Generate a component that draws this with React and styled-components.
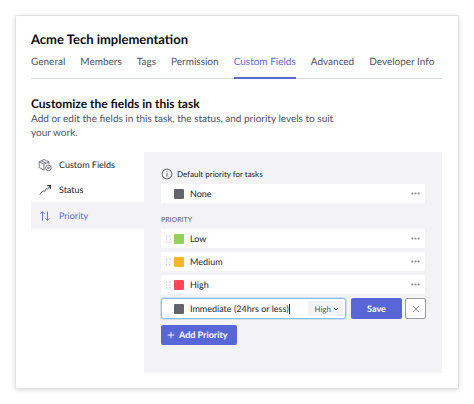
import React, { useState } from "react";
import styled, { createGlobalStyle } from "styled-components";

const tabs = [
  "General",
  "Members",
  "Tags",
  "Permission",
  "Custom Fields",
  "Advanced",
  "Developer Info",
];

const levels = [
  { name: "Low", color: "#92d25c" },
  { name: "Medium", color: "#fdb52c" },
  { name: "High", color: "#fc4557" },
];

const FieldsIcon = () => (
  <svg width="14" height="14" viewBox="0 0 14 14" fill="none" stroke="currentColor" strokeWidth="0.8" strokeLinejoin="round">
    <path d="M6.6 11.7 6 12 1.2 9.6V3.9L6 1.5l5 2.4v2.3" />
    <path d="M1.2 3.9 6 6.2l5-2.3M6 6.2V12M3.4 2.8l4.9 2.3" />
    <circle cx="10.4" cy="9.9" r="2.8" />
    <circle cx="10.4" cy="9.9" r="0.9" />
  </svg>
);

const StatusIcon = () => (
  <svg width="14" height="14" viewBox="0 0 14 14" fill="none" stroke="currentColor" strokeWidth="0.8" strokeLinecap="round" strokeLinejoin="round">
    <path d="m2 11.4 3.1-3.7 1.5 1L8.4 5.4l1.2.8 2.5-3.2" />
    <path d="M9.8 2.7h2.6v2.6" strokeWidth="1.2" />
  </svg>
);

const PriorityIcon = () => (
  <svg width="14" height="14" viewBox="0 0 14 14" fill="none" stroke="currentColor" strokeWidth="0.9" strokeLinecap="round" strokeLinejoin="round">
    <path d="M4.5 11.3V2.8M2.8 4.6l1.7-1.8 1.7 1.8" />
    <path d="M9.5 2.8v8.5M7.8 9.5l1.7 1.8 1.7-1.8" />
  </svg>
);

const InfoIcon = () => (
  <svg width="12" height="12" viewBox="0 0 12 12" fill="none" stroke="#4a4c57" strokeWidth="0.9">
    <circle cx="6" cy="6" r="4.9" />
    <path d="M6 5.2v3.4M6 3.3v1" />
  </svg>
);

const DotsIcon = () => (
  <svg width="9" height="3" viewBox="0 0 9 3" fill="#888a94">
    <circle cx="1.3" cy="1.5" r="1.05" />
    <circle cx="4.5" cy="1.5" r="1.05" />
    <circle cx="7.7" cy="1.5" r="1.05" />
  </svg>
);

const GripIcon = () => (
  <svg width="5" height="8" viewBox="0 0 5 8" fill="#c3c3cf">
    <path d="M0 .5h1.2v1.2H0zM0 3.4h1.2v1.2H0zM0 6.3h1.2v1.2H0zM3.3.5h1.2v1.2H3.3zM3.3 3.4h1.2v1.2H3.3zM3.3 6.3h1.2v1.2H3.3z" />
  </svg>
);

const PlusIcon = () => (
  <svg width="8" height="8" viewBox="0 0 8 8" stroke="#fff" strokeWidth="0.9">
    <path d="M4 .7v6.6M.7 4h6.6" />
  </svg>
);

const CloseIcon = () => (
  <svg width="8" height="8" viewBox="0 0 8 8" stroke="#7b7d88" strokeWidth="0.9">
    <path d="m.8.8 6.4 6.4M7.2.8.8 7.2" />
  </svg>
);

const navItems = [
  { label: "Custom Fields", icon: <FieldsIcon />, color: "#5b5d6c" },
  { label: "Status", icon: <StatusIcon />, color: "#33343c" },
  { label: "Priority", icon: <PriorityIcon />, active: true },
];

const PriorityRow = ({ name, color, draggable }) => (
  <Row>
    <Grip>{draggable && <GripIcon />}</Grip>
    <Swatch $color={color} />
    <RowName>{name}</RowName>
    <MoreButton aria-label={`More options for ${name}`}>
      <DotsIcon />
    </MoreButton>
  </Row>
);

const App = () => {
  const [name, setName] = useState("Immediate (24hrs or less)");

  return (
    <>
      <GlobalStyle />
      <Card>
        <Title>Acme Tech implementation</Title>
        <Tabs>
          {tabs.map((t) => (
            <Tab key={t} href="#" $active={t === "Custom Fields"}>
              {t}
            </Tab>
          ))}
        </Tabs>

        <Subtitle>Customize the fields in this task</Subtitle>
        <Description>
          Add or edit the fields in this task, the status, and priority levels to suit your work.
        </Description>

        <Body>
          <SideNav>
            {navItems.map((item) => (
              <NavItem key={item.label} href="#" $active={item.active}>
                <NavIcon $color={item.color}>{item.icon}</NavIcon>
                {item.label}
              </NavItem>
            ))}
          </SideNav>

          <Panel>
            <PanelLabel>
              <InfoIcon />
              Default priority for tasks
            </PanelLabel>
            <PriorityRow name="None" color="#62646b" />

            <GroupLabel>PRIORITY</GroupLabel>
            <List>
              {levels.map((l) => (
                <PriorityRow key={l.name} name={l.name} color={l.color} draggable />
              ))}
              <EditRow>
                <EditBox>
                  <Swatch $color="#62646b" />
                  <NameInput
                    aria-label="Priority name"
                    value={name}
                    onChange={(e) => setName(e.target.value)}
                  />
                  <Caret />
                  <SelectWrap>
                    <LevelSelect aria-label="Priority level" defaultValue="High">
                      <option>Low</option>
                      <option>Medium</option>
                      <option>High</option>
                    </LevelSelect>
                    <Chevron viewBox="0 0 6 4">
                      <path d="m.8.9 2.2 2L5.2.9" />
                    </Chevron>
                  </SelectWrap>
                </EditBox>
                <SaveButton>Save</SaveButton>
                <CancelButton aria-label="Cancel">
                  <CloseIcon />
                </CancelButton>
              </EditRow>
            </List>
            <AddButton>
              <PlusIcon />
              Add Priority
            </AddButton>
          </Panel>
        </Body>
      </Card>
    </>
  );
};

export default App;

// ---------------- Styled Components ----------------
const GlobalStyle = createGlobalStyle`
  * {
    box-sizing: border-box;
  }
  body {
    margin: 0;
    background: #fff;
    font-family: Lato, "Liberation Sans", sans-serif;
    font-size: 9px;
    line-height: 14px;
    text-rendering: geometricPrecision;
    color: #24252c;
  }
  button, input, select {
    font: inherit;
    color: inherit;
    text-rendering: inherit;
    margin: 0;
    padding: 0;
    border: 0;
    background: none;
  }
  svg {
    display: block;
    flex-shrink: 0;
  }
`;

const Card = styled.main`
  margin: 15px 15px 16px;
  padding: 15px 16px 15px 15px;
  background: #fff;
  border: 1px solid #e2e3e5;
  border-radius: 2px;
  box-shadow: 0 1px 4px rgba(0, 0, 0, 0.16);
`;

const Title = styled.h1`
  margin: 0;
  font-size: 13px;
  line-height: 16px;
  font-weight: 700;
  color: #0c0c10;
`;

const Tabs = styled.nav`
  display: flex;
  gap: 15px;
  margin-top: 8px;
  border-bottom: 1px solid #d5dbe3;
`;

const Tab = styled.a`
  padding-bottom: 8px;
  margin-bottom: -1px;
  border-bottom: 2px solid ${(p) => (p.$active ? "#5c68cf" : "transparent")};
  font-size: 10px;
  color: ${(p) => (p.$active ? "#5c68d8" : "#4e5166")};
  text-decoration: none;
  white-space: nowrap;
`;

const Subtitle = styled.h2`
  margin: 17px 0 0;
  font-size: 12px;
  line-height: 16px;
  font-weight: 700;
  color: #0c0c10;
`;

const Description = styled.p`
  margin: 0;
  max-width: 310px;
  font-size: 10px;
  color: #4e5166;
`;

const Body = styled.div`
  display: flex;
  margin-top: 12px;
`;

const SideNav = styled.nav`
  width: 113px;
  flex-shrink: 0;
`;

const NavItem = styled.a`
  display: flex;
  align-items: center;
  gap: 7px;
  height: ${(p) => (p.$active ? 27 : 25)}px;
  padding-left: 7px;
  background: ${(p) => (p.$active ? "#f3f3f5" : "transparent")};
  color: ${(p) => (p.$active ? "#5c68d8" : "#24252c")};
  text-decoration: none;
`;

const NavIcon = styled.span`
  color: ${(p) => p.$color || "inherit"};
`;

const Panel = styled.section`
  flex: 1;
  min-width: 0;
  padding: 15px 17px 28px;
  background: #f3f3f5;
`;

const PanelLabel = styled.div`
  display: flex;
  align-items: center;
  gap: 4px;
  margin-bottom: 3px;
  font-size: 8px;
`;

const Row = styled.div`
  display: flex;
  align-items: center;
  height: 19px;
  padding: 0 5px;
  background: #fff;
  border-radius: 1px;
`;

const Grip = styled.span`
  width: 8px;
`;

const Swatch = styled.span`
  width: 10px;
  height: 10px;
  flex-shrink: 0;
  border-radius: 1px;
  background: ${(p) => p.$color};
`;

const RowName = styled.span`
  flex: 1;
  margin-left: 6px;
`;

const MoreButton = styled.button`
  cursor: pointer;
`;

const GroupLabel = styled.div`
  margin: 10px 0 2px;
  font-size: 7px;
  color: #5a5c6c;
`;

const List = styled.div`
  display: flex;
  flex-direction: column;
  gap: 4px;
`;

const EditRow = styled.div`
  display: flex;
  height: 21px;
  margin-right: -1px;
`;

const EditBox = styled.div`
  display: flex;
  align-items: center;
  flex: 1;
  min-width: 0;
  padding: 0 2px 0 12px;
  background: #fff;
  border: 1px solid #8bbdf0;
  border-radius: 3px;
  box-shadow: 0 0 0 1px rgba(139, 189, 240, 0.35);
`;

const NameInput = styled.input`
  field-sizing: content;
  min-width: 0;
  margin-left: 6px;
  outline: none;
  caret-color: transparent;
`;

const Caret = styled.span`
  width: 1px;
  height: 10px;
  background: #24252c;
`;

const SelectWrap = styled.span`
  position: relative;
  margin-left: auto;
`;

const LevelSelect = styled.select`
  display: block;
  appearance: none;
  field-sizing: content;
  height: 15px;
  padding: 0 12px 0 6px;
  font-size: 8px;
  color: #5a5c6c;
  background: #f3f3f5;
  border-radius: 1px;
`;

const Chevron = styled.svg`
  position: absolute;
  right: 4px;
  top: 6px;
  width: 6px;
  height: 4px;
  fill: none;
  stroke: #5a5c6c;
  pointer-events: none;
`;

const SaveButton = styled.button`
  width: 51px;
  margin-left: 5px;
  border-radius: 2px;
  background: #5866d8;
  color: #fff;
  font-weight: 700;
`;

const CancelButton = styled.button`
  display: flex;
  align-items: center;
  justify-content: center;
  width: 21px;
  margin-left: 3px;
  background: #fff;
  border: 1px solid #9b9da8;
  border-radius: 2px;
`;

const AddButton = styled.button`
  display: flex;
  align-items: center;
  gap: 4px;
  height: 20px;
  margin-top: 6px;
  padding: 0 9px 0 6px;
  border-radius: 2px;
  background: #5866d8;
  color: #fff;
  font-weight: 700;
`;
